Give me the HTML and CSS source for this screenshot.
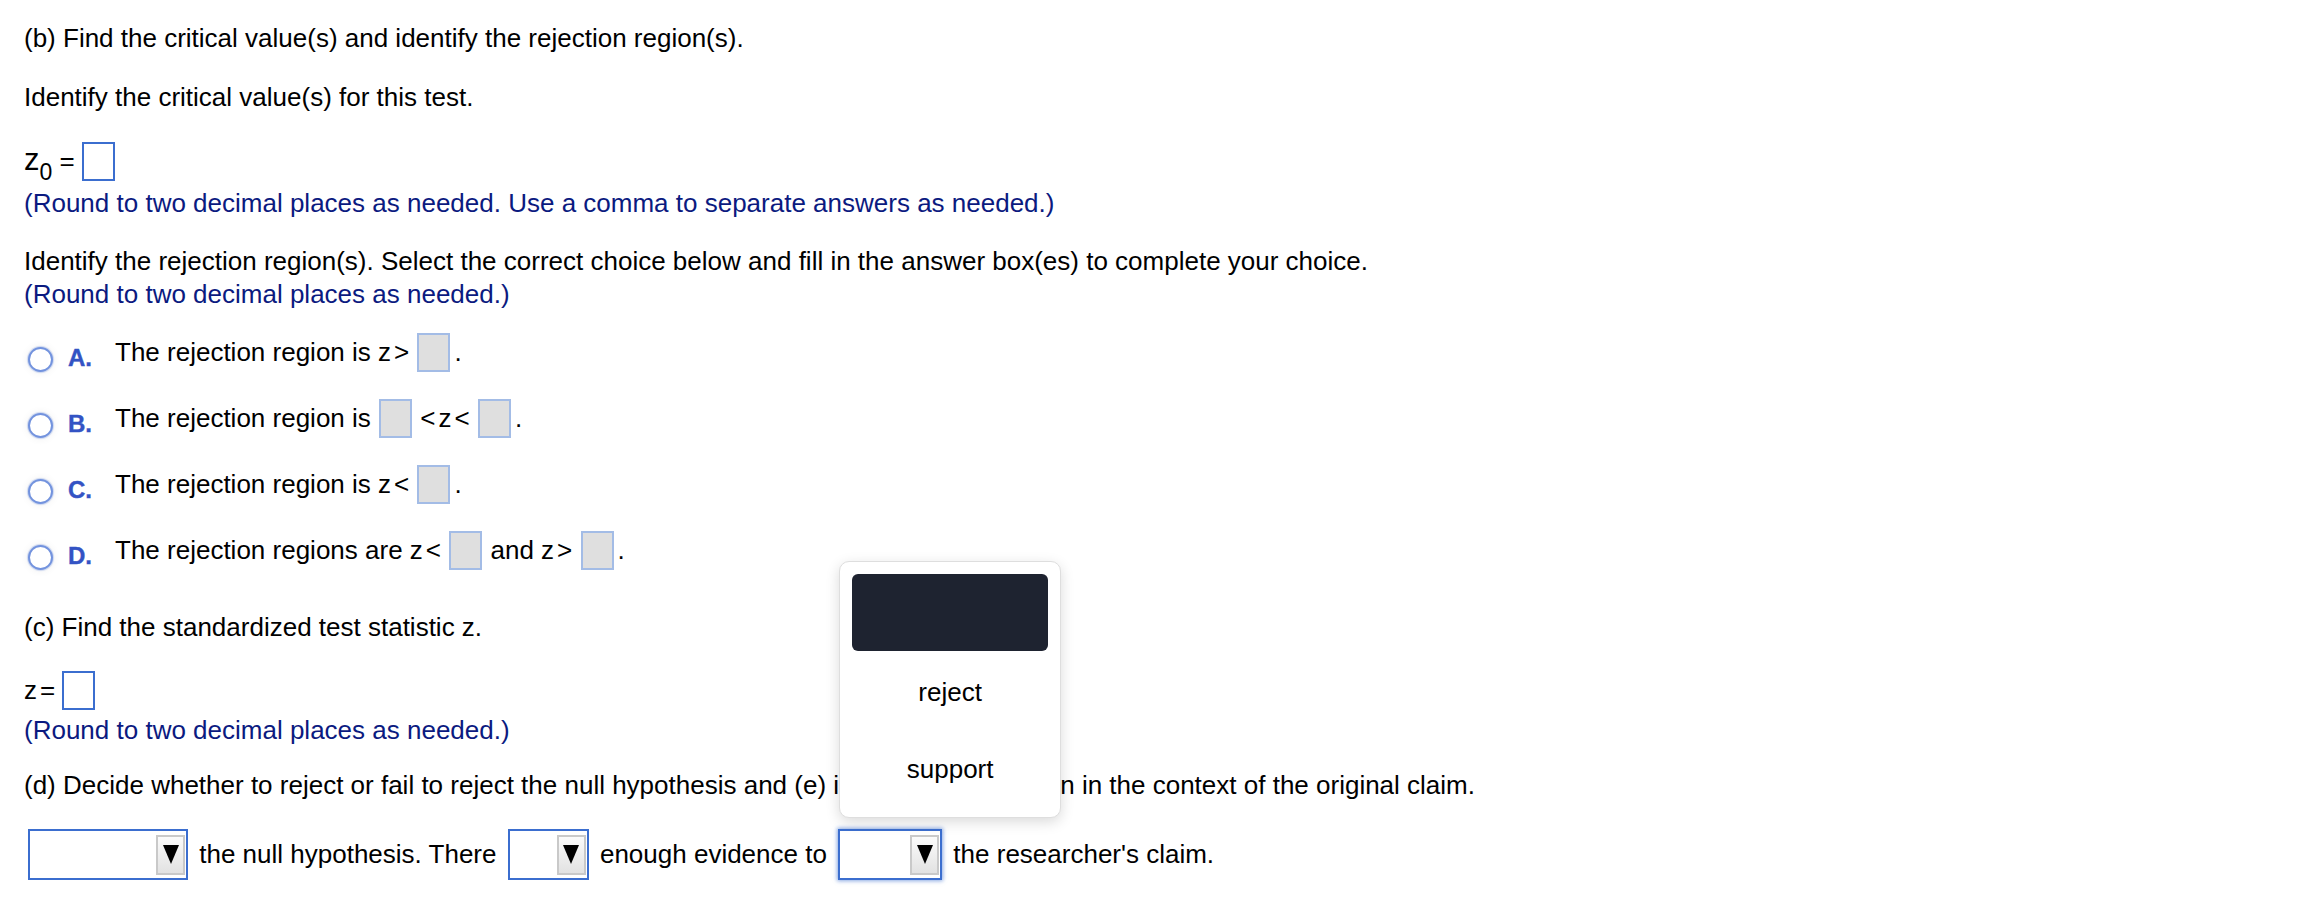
FILE: index.html
```html
<!DOCTYPE html>
<html lang="en">
  <head>
    <meta charset="UTF-8" />
    <meta name="viewport" content="width=device-width, initial-scale=1.0" />
    <title>Hypothesis test</title>
    <link rel="stylesheet" href="styles.css">
  </head>
  <body>
    <div class="question">
      <p>(b) Find the critical value(s) and identify the rejection region(s).</p>
      <p class="prompt">Identify the critical value(s) for this test.</p>
      <div class="answer-row first"><span class="var">z<sub>0</sub></span> = <span class="box open"></span></div>
      <p class="hint">(Round to two decimal places as needed. Use a comma to separate answers as needed.)</p>

      <p class="prompt region">Identify the rejection region(s). Select the correct choice below and fill in the answer box(es) to complete your choice.</p>
      <p class="hint flush">(Round to two decimal places as needed.)</p>

      <div class="choices">
        <div class="choice">
          <span class="radio"></span>
          <span class="letter">A.</span>
          <span class="choice-text">The rejection region is z<span class="rel">&gt;</span> <span class="box locked"></span><span class="dot">.</span></span>
        </div>
        <div class="choice">
          <span class="radio"></span>
          <span class="letter">B.</span>
          <span class="choice-text">The rejection region is <span class="box locked"></span> &lt;<span class="rel">z</span><span class="rel">&lt;</span> <span class="box locked"></span><span class="dot">.</span></span>
        </div>
        <div class="choice">
          <span class="radio"></span>
          <span class="letter">C.</span>
          <span class="choice-text">The rejection region is z<span class="rel">&lt;</span> <span class="box locked"></span><span class="dot">.</span></span>
        </div>
        <div class="choice">
          <span class="radio"></span>
          <span class="letter">D.</span>
          <span class="choice-text">The rejection regions are z<span class="rel">&lt;</span> <span class="box locked"></span> and z<span class="rel">&gt;</span> <span class="box locked"></span><span class="dot">.</span></span>
        </div>
      </div>

      <p class="part-c">(c) Find the standardized test statistic z.</p>
      <div class="answer-row second">z<span class="rel">=</span> <span class="box open"></span></div>
      <p class="hint close">(Round to two decimal places as needed.)</p>

      <p class="part-d">(d) Decide whether to reject or fail to reject the null hypothesis and (e) interpret the decision in the context of the original claim.</p>

      <div class="decision">
        <span class="dropdown"><span class="select wide"><span class="arrow"><svg width="16" height="19" viewBox="0 0 16 19"><polygon points="0,0 16,0 8,19" fill="#000"/></svg></span></span></span> the null hypothesis. There <span class="dropdown"><span class="select mid"><span class="arrow"><svg width="16" height="19" viewBox="0 0 16 19"><polygon points="0,0 16,0 8,19" fill="#000"/></svg></span></span></span> enough evidence to <span class="dropdown"><span class="select short focused"><span class="arrow"><svg width="16" height="19" viewBox="0 0 16 19"><polygon points="0,0 16,0 8,19" fill="#000"/></svg></span></span>
          <span class="menu">
            <span class="option active"></span>
            <span class="option">reject</span>
            <span class="option">support</span>
          </span>
        </span> the researcher's claim.
      </div>
    </div>
  </body>
</html>
```

FILE: styles.css
```css
* {
  margin: 0;
  padding: 0;
  box-sizing: border-box;
}

body {
  background-color: #fff;
  color: #000;
  font-family: 'Liberation Sans', Arial, sans-serif;
  font-size: 26px;
  line-height: 33px;
}

.question {
  padding: 22px 24px;
}

.prompt {
  margin-top: 26px;
}

.prompt.region {
  margin-top: 25px;
}

.hint {
  color: #0b1a80;
  margin-top: 6px;
}

.hint.flush {
  margin-top: 0;
}

.hint.close {
  margin-top: 4px;
}

/* rows holding an answer box */
.answer-row {
  height: 39px;
  line-height: 39px;
  white-space: nowrap;
}

.answer-row.first {
  margin-top: 28px;
}

.answer-row.second {
  margin-top: 27px;
}

.var {
  font-size: 31px;
  line-height: 1;
}

.var sub {
  font-size: 23px;
  line-height: 0;
  vertical-align: -10px;
}

.rel {
  margin-left: 3px;
}

.box {
  display: inline-block;
  vertical-align: top;
  width: 33px;
  height: 39px;
}

.box.open {
  border: 2px solid #3b6ecf;
  background-color: #fff;
}

.box.locked {
  margin: 0 1px;
  border: 2px solid #a3bce6;
  background-color: #dfdfdf;
}

.dot {
  margin-left: 3px;
}

/* multiple choice */
.choices {
  margin-top: 22px;
  display: flex;
  flex-direction: column;
  gap: 27px;
}

.choice {
  display: flex;
  align-items: center;
  height: 39px;
}

.radio {
  flex: none;
  width: 25px;
  height: 25px;
  margin: 14px 0 0 4px;
  border-radius: 50%;
  border: 2.5px solid #7393de;
  background-color: #fff;
  box-shadow: 0 0 1px 1px rgba(115, 147, 222, 0.35), 0 0 6px 3px rgba(0, 0, 0, 0.03);
}

.letter {
  flex: none;
  width: 47px;
  margin: 10px 0 0 15px;
  color: #3353c4;
  font-size: 24px;
  font-weight: 700;
  -webkit-text-stroke: 0.4px #3353c4;
}

.choice-text {
  line-height: 39px;
  white-space: nowrap;
}

.part-c {
  margin-top: 41px;
}

.part-d {
  margin-top: 22px;
}

/* drop downs */
.decision {
  margin-top: 27px;
  height: 51px;
  line-height: 51px;
  white-space: nowrap;
}

.dropdown {
  position: relative;
  display: inline-block;
  vertical-align: top;
  margin: 0 4px;
}

.select {
  display: flex;
  justify-content: flex-end;
  align-items: center;
  height: 51px;
  padding-right: 1px;
  border: 2px solid #3b6ecf;
  background-color: #fff;
}

.select.wide {
  width: 160px;
}

.select.mid {
  width: 81px;
}

.select.short {
  width: 104px;
}

.select.focused {
  box-shadow: 0 0 4px 1px rgba(59, 110, 207, 0.6);
}

.arrow {
  display: flex;
  justify-content: center;
  align-items: center;
  width: 29px;
  height: 40px;
  border: 2px solid #c9c9c9;
  background: linear-gradient(#fbfbfb, #e2e2e2);
}

.menu {
  position: absolute;
  left: 1px;
  bottom: calc(100% + 11px);
  z-index: 2;
  display: flex;
  flex-direction: column;
  width: 222px;
  padding: 12px;
  border: 1px solid #dedede;
  border-radius: 10px;
  background-color: #fff;
  box-shadow: 0 4px 14px rgba(0, 0, 0, 0.15);
  line-height: 33px;
}

.option {
  display: flex;
  justify-content: center;
  align-items: center;
  height: 77px;
  padding-top: 5px;
  border-radius: 6px;
}

.option.active {
  background-color: #1e2330;
}
```
